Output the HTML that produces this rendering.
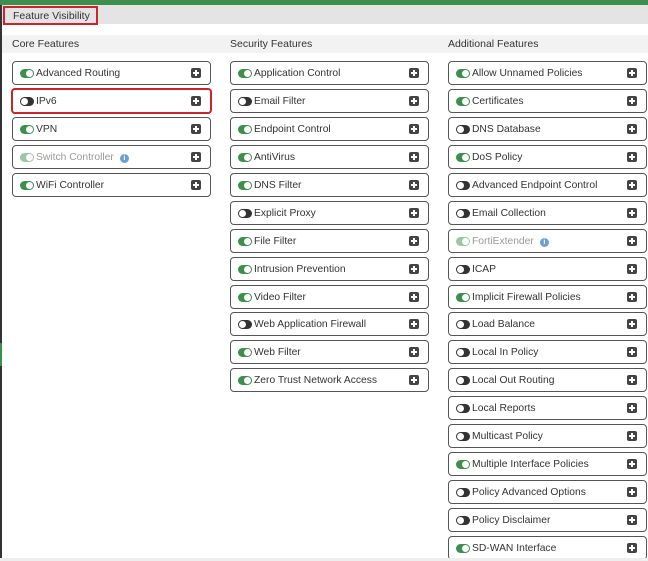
<!DOCTYPE html><html><head><style>
body{margin:0;width:648px;height:561px;overflow:hidden;background:#fff;font-family:"Liberation Sans",sans-serif;position:relative}
.top{position:absolute;left:0;top:0;width:648px;height:5px;background:#3e8e50}
.hdr{position:absolute;left:0;top:5px;width:648px;height:19px;background:#e4e4e4}
.lb{position:absolute;left:0;top:5px;width:2px;height:556px;background:#333}
.lg{position:absolute;left:0;top:343px;width:2px;height:23px;background:#3e8e50}
.fv{position:absolute;left:3px;top:6px;width:95px;height:19px;border:2px solid #c9252d;box-sizing:border-box;font-size:10.5px;color:#333;padding:2px 0 0 8px;white-space:nowrap}
.chb{position:absolute;left:2px;top:35px;width:646px;height:18px;background:#f2f2f2}
.ch{position:absolute;top:38px;font-size:10.5px;color:#333;white-space:nowrap}
.b{position:absolute;height:24px;border:1px solid #555;border-radius:4px;box-sizing:border-box;font-size:10.3px;color:#333;line-height:24px;padding-left:23px;background:#fff;white-space:nowrap}
.b.d{color:#999}
.t{position:absolute;left:7px;top:7px;width:14px;height:9px;border-radius:5px;box-sizing:border-box}
.on{background:#3e8e50}.on::after{content:"";position:absolute;right:1px;top:1px;width:7px;height:7px;border-radius:50%;background:#fff}
.off{background:#333}.off::after{content:"";position:absolute;left:1px;top:1px;width:7px;height:7px;border-radius:50%;background:#fff}
.dis{background:#9cc6a5}.dis::after{content:"";position:absolute;right:1px;top:1px;width:7px;height:7px;border-radius:50%;background:#fff}
.p{position:absolute;right:9px;top:6px;width:10px;height:10px;background:#444;border-radius:2px}
.p::before{content:"";position:absolute;left:2px;top:4px;width:6px;height:2px;background:#fff}
.p::after{content:"";position:absolute;left:4px;top:2px;width:2px;height:6px;background:#fff}
.i{display:inline-block;width:9px;height:9px;border-radius:50%;background:#6d9fd0;color:#fff;font-size:7px;line-height:9px;text-align:center;font-weight:bold;margin-left:6px;vertical-align:0}
.bot{position:absolute;left:0;top:558px;width:648px;height:3px;background:#eee}
</style></head><body>
<div class="top"></div><div class="hdr"></div><div class="lb"></div><div class="lg"></div>
<div class="fv">Feature Visibility</div>
<div class="chb"></div>
<div class="ch" style="left:12px">Core Features</div>
<div class="ch" style="left:230px">Security Features</div>
<div class="ch" style="left:448px">Additional Features</div>
<div id="c"></div>
<div class="bot"></div>
<script>
const cols=[[12,199,[["on","Advanced Routing"],["off","IPv6"],["on","VPN"],["dis","Switch Controller",1],["on","WiFi Controller"]]],
[230,199,[["on","Application Control"],["off","Email Filter"],["on","Endpoint Control"],["on","AntiVirus"],["on","DNS Filter"],["off","Explicit Proxy"],["on","File Filter"],["on","Intrusion Prevention"],["on","Video Filter"],["off","Web Application Firewall"],["on","Web Filter"],["on","Zero Trust Network Access"]]],
[448,199,[["on","Allow Unnamed Policies"],["on","Certificates"],["off","DNS Database"],["on","DoS Policy"],["off","Advanced Endpoint Control"],["off","Email Collection"],["dis","FortiExtender",1],["off","ICAP"],["on","Implicit Firewall Policies"],["off","Load Balance"],["off","Local In Policy"],["off","Local Out Routing"],["off","Local Reports"],["off","Multicast Policy"],["on","Multiple Interface Policies"],["off","Policy Advanced Options"],["off","Policy Disclaimer"],["on","SD-WAN Interface"]]]];
let h="";
cols.forEach(([x,w,items])=>items.forEach((it,i)=>{
let top=Math.round(61+i*27.94);let red=(x==12&&i==1);
h+=`<div class="b${it[0]=="dis"?" d":""}" style="left:${red?x-1:x}px;top:${red?top-1:top}px;width:${red?w+2:w}px;${red?"height:26px;border:2px solid #c9252d;":""}"><span class="t ${it[0]}"></span>${it[1]}${it[2]?'<span class="i">i</span>':''}<span class="p"></span></div>`;}));
document.getElementById("c").innerHTML=h;
</script>
</body></html>
